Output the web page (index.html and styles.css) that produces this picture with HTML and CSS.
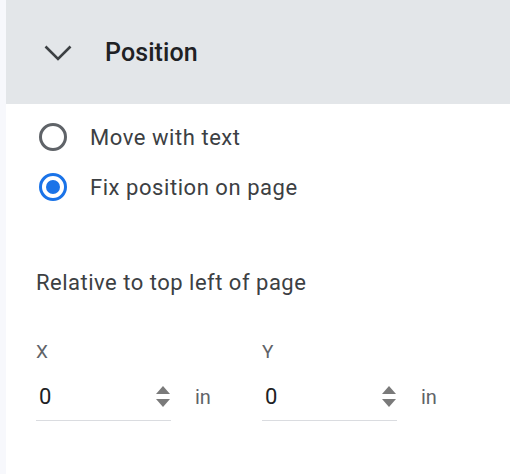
FILE: index.html
```html
<!DOCTYPE html>
<html>
<head>
<meta charset="utf-8">
<link rel="stylesheet" href="styles.css">
</head>
<body>
<div class="page">
  <div class="strip"></div>
  <div class="panel">
    <div class="header">
      <svg class="chev" width="28" height="16" viewBox="0 0 28 16"><path d="M1.5 1.5 L14 14 L26.5 1.5" fill="none" stroke="#3c4043" stroke-width="2.6"/></svg>
      <span class="title">Position</span>
    </div>
    <div class="options">
      <div class="opt">
        <span class="radio"></span>
        <span class="opt-label">Move with text</span>
      </div>
      <div class="opt">
        <span class="radio checked"></span>
        <span class="opt-label">Fix position on page</span>
      </div>
    </div>
    <div class="relative">Relative to top left of page</div>
    <div class="coords">
      <div class="coord">
        <div class="coord-label">X</div>
        <div class="coord-row">
          <div class="field">
            <span class="value">0</span>
            <span class="spin"><span class="up"></span><span class="down"></span></span>
          </div>
          <span class="unit">in</span>
        </div>
      </div>
      <div class="coord">
        <div class="coord-label">Y</div>
        <div class="coord-row">
          <div class="field">
            <span class="value">0</span>
            <span class="spin"><span class="up"></span><span class="down"></span></span>
          </div>
          <span class="unit">in</span>
        </div>
      </div>
    </div>
  </div>
</div>
</body>
</html>
```

FILE: styles.css
```css
html, body {
  margin: 0;
  padding: 0;
  background: #ffffff;
  font-family: Roboto, "Liberation Sans", Arial, sans-serif;
}
.page {
  display: flex;
  width: 510px;
  height: 474px;
  overflow: hidden;
}
.strip {
  width: 6px;
  flex: none;
  background: #f7f8fc;
}
.panel {
  flex: 1;
  background: #ffffff;
}
.header {
  height: 104px;
  background: #e3e6e9;
  display: flex;
  align-items: center;
}
.chev {
  margin-left: 38px;
  margin-top: 1px;
  flex: none;
}
.title {
  margin-left: 33px;
  font-size: 25px;
  font-weight: 500;
  color: #202124;
  letter-spacing: 0.1px;
}
.options {
  padding-top: 8px;
}
.opt {
  height: 50px;
  display: flex;
  align-items: center;
}
.radio {
  box-sizing: border-box;
  width: 28px;
  height: 28px;
  border-radius: 50%;
  border: 3px solid #5f6368;
  margin-left: 33px;
  flex: none;
  display: flex;
  align-items: center;
  justify-content: center;
}
.radio.checked {
  border-color: #1a73e8;
}
.radio.checked::after {
  content: "";
  width: 14px;
  height: 14px;
  border-radius: 50%;
  background: #1a73e8;
}
.opt-label {
  margin-left: 23px;
  font-size: 22px;
  letter-spacing: 0.55px;
  color: #3c4043;
}
.relative {
  margin-top: 58px;
  margin-left: 30px;
  font-size: 22px;
  letter-spacing: 0.5px;
  color: #3c4043;
  line-height: 26px;
}
.coords {
  display: flex;
  margin-left: 30px;
  margin-top: 45px;
}
.coord {
  width: 226px;
}
.coord-label {
  font-size: 19px;
  color: #5f6368;
  line-height: 22px;
}
.coord-row {
  display: flex;
  align-items: center;
  margin-top: 10px;
}
.field {
  width: 135px;
  height: 48px;
  box-sizing: border-box;
  border-bottom: 1px solid #dadce0;
  display: flex;
  align-items: center;
  justify-content: space-between;
}
.value {
  font-size: 22px;
  color: #202124;
  margin-left: 3px;
}
.spin {
  display: flex;
  flex-direction: column;
  align-items: center;
  gap: 5px;
  margin-right: 1px;
}
.up {
  width: 0;
  height: 0;
  border-left: 7px solid transparent;
  border-right: 7px solid transparent;
  border-bottom: 8px solid #7a7a7a;
}
.down {
  width: 0;
  height: 0;
  border-left: 7px solid transparent;
  border-right: 7px solid transparent;
  border-top: 8px solid #7a7a7a;
}
.unit {
  margin-left: 24px;
  font-size: 20px;
  color: #5f6368;
}
```
